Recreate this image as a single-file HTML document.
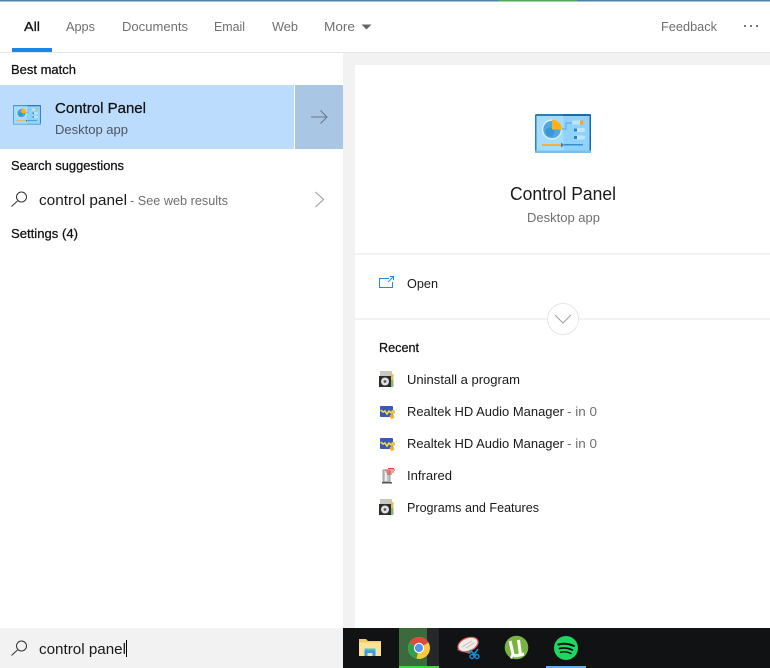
<!DOCTYPE html>
<html lang="en">
<head>
<meta charset="utf-8">
<title>Search - Control Panel</title>
<style>
html,body{margin:0;padding:0;background:#fff;width:770px;height:668px;overflow:hidden}
svg{display:block;font-family:"Liberation Sans",sans-serif;font-size:13px;fill:#1a1a1a}
.g{fill:#707070}
.m{stroke:#111;stroke-width:.25;fill:#111}
</style>
</head>
<body>
<svg width="770" height="668" viewBox="0 0 770 668" xmlns="http://www.w3.org/2000/svg">
<defs>
<symbol id="cp" viewBox="0 0 56 39">
<rect x="0" y="0" width="56" height="39" rx="1.500" fill="#2b7fb8"/>
<rect x="28" y="0" width="28" height="39" rx="1.500" fill="#1a6ba6"/>
<rect x="0" y="36.500" width="56" height="2.500" fill="#7cc0e8"/>
<rect x="1.500" y="2" width="53" height="34.500" fill="#8fd2fb"/>
<rect x="1.500" y="2" width="27" height="34.500" fill="#a4dcfc"/>
<circle cx="17" cy="15.500" r="10" fill="#e4f5fe"/>
<circle cx="17" cy="15.500" r="8.800" fill="#4fa9e0"/>
<circle cx="15" cy="18" r="4.500" fill="#3a97d4"/>
<path d="M17 5.500 A10 10 0 0 1 27 15.500 L17 15.500Z" fill="#fdb21c"/>
<path d="M27 15 H31 V9 H37" fill="none" stroke="#5aa9de" stroke-width="1"/>
<rect x="37" y="6.500" width="12" height="4" rx="2" fill="#bfe5fb"/>
<rect x="45" y="6.500" width="3.500" height="4" fill="#f7a52a"/>
<rect x="39" y="14" width="11" height="4" rx="2" fill="#bfe5fb"/>
<rect x="39" y="14.500" width="3" height="3" fill="#2a80c0"/>
<rect x="39" y="21.500" width="11" height="4" rx="2" fill="#bfe5fb"/>
<rect x="39" y="22" width="3" height="3" fill="#2a80c0"/>
<rect x="7" y="30" width="19" height="2" fill="#f0b043"/>
<path d="M26 28.500 l3 2.500 -3 2.500z" fill="#2a80c0"/>
<rect x="29" y="30" width="19" height="1.500" fill="#3a8fca"/>
</symbol>
<symbol id="un" viewBox="0 0 15 16">
<rect x="1" y="0" width="12" height="5" fill="#c8c8bc"/>
<rect x="11" y="3" width="3.500" height="6" fill="#d9bf6a"/>
<rect x="11" y="9" width="3.500" height="7" fill="#8fb07c"/>
<rect x="0" y="5" width="12" height="11" fill="#2b2d2f"/>
<circle cx="6" cy="10.500" r="4" fill="#e0e0e0"/>
<circle cx="6" cy="10.500" r="1.400" fill="#555"/>
</symbol>
<symbol id="rt" viewBox="0 0 16 13">
<rect x="0" y="0" width="13" height="11" rx="1" fill="#3b57bb"/>
<path d="M0.500 4 L3 6 L5 5 L7 8 L9 5 L11 7 L14 4" fill="none" stroke="#e9e23e" stroke-width="1.600"/>
<circle cx="13" cy="6" r="2" fill="#eec04a"/>
<circle cx="12" cy="10.500" r="2.300" fill="#eeb233"/>
</symbol>
</defs>

<!-- top accent -->
<rect x="0" y="0" width="770" height="1.500" fill="#4a81a8"/>
<rect x="499" y="0" width="78" height="1.500" fill="#55a85a"/>

<!-- tabs -->
<text x="24" y="31" class="m" textLength="16" lengthAdjust="spacingAndGlyphs">All</text>
<text x="66" y="31" class="g" textLength="29" lengthAdjust="spacingAndGlyphs">Apps</text>
<text x="122" y="31" class="g" textLength="66" lengthAdjust="spacingAndGlyphs">Documents</text>
<text x="214" y="31" class="g" textLength="31" lengthAdjust="spacingAndGlyphs">Email</text>
<text x="272" y="31" class="g" textLength="26" lengthAdjust="spacingAndGlyphs">Web</text>
<text x="324" y="31" class="g" textLength="31" lengthAdjust="spacingAndGlyphs">More</text>
<path d="M361.500 24.500 H371.500 L366.500 29.500Z" fill="#666"/>
<text x="661" y="31" class="g" textLength="56" lengthAdjust="spacingAndGlyphs">Feedback</text>
<rect x="744" y="25" width="2" height="2" fill="#777"/>
<rect x="750" y="25" width="2" height="2" fill="#777"/>
<rect x="756" y="25" width="2" height="2" fill="#777"/>
<rect x="12" y="48" width="40" height="4" fill="#1a87ea"/>
<rect x="0" y="52" width="770" height="1" fill="#e6e6e6"/>

<!-- right column backdrop -->
<rect x="343" y="53" width="427" height="12" fill="#f2f2f2"/>
<rect x="343" y="53" width="12" height="575" fill="#f2f2f2"/>

<!-- left list -->
<text x="11" y="74" class="m" textLength="65" lengthAdjust="spacingAndGlyphs">Best match</text>
<rect x="0" y="85" width="294" height="64" fill="#bbdcfc"/>
<rect x="295" y="85" width="48" height="64" fill="#a9c7e4"/>
<use href="#cp" x="13" y="105" width="28" height="20"/>
<text x="55" y="113" font-size="15" class="m" textLength="91" lengthAdjust="spacingAndGlyphs">Control Panel</text>
<text x="55" y="134" fill="#4d5560" textLength="73" lengthAdjust="spacingAndGlyphs">Desktop app</text>
<path d="M311 117 H327 M320.500 110.500 L327 117 L320.500 123.500" fill="none" stroke="#6a7684" stroke-width="1"/>

<text x="11" y="170" class="m" textLength="113" lengthAdjust="spacingAndGlyphs">Search suggestions</text>
<g fill="none" stroke="#333" stroke-width="1">
<circle cx="21.500" cy="197" r="5"/>
<path d="M17.500 201 L11.500 206.500"/>
</g>
<text x="39" y="205" font-size="15" fill="#1a1a1a" textLength="88" lengthAdjust="spacingAndGlyphs">control panel</text>
<text x="130" y="205" fill="#707070" textLength="98" lengthAdjust="spacingAndGlyphs">- See web results</text>
<path d="M315.500 192 L323.500 199.500 L315.500 207" fill="none" stroke="#999" stroke-width="1"/>
<text x="11" y="238" class="m" textLength="67" lengthAdjust="spacingAndGlyphs">Settings (4)</text>

<!-- right header -->
<use href="#cp" x="535" y="114" width="56" height="39"/>
<text x="510" y="200" font-size="18" fill="#1a1a1a" textLength="106" lengthAdjust="spacingAndGlyphs">Control Panel</text>
<text x="527" y="222" class="g" textLength="73" lengthAdjust="spacingAndGlyphs">Desktop app</text>
<rect x="355" y="253" width="415" height="2" fill="#f2f2f2"/>

<!-- open -->
<path d="M389 278.500 H379.500 V287.500 H392.500 V282" fill="none" stroke="#2a86e0" stroke-width="1"/>
<path d="M388 282 L393.500 276.500 M390 276.500 H393.500 V280" fill="none" stroke="#2a86e0" stroke-width="1"/>
<text x="407" y="288" fill="#1a1a1a" textLength="31" lengthAdjust="spacingAndGlyphs">Open</text>
<rect x="355" y="318" width="415" height="2" fill="#f2f2f2"/>
<circle cx="563" cy="319" r="15.500" fill="#fff" stroke="#e6e6e6" stroke-width="1"/>
<path d="M555 315 L563 323 L571 315" fill="none" stroke="#a0a0a0" stroke-width="1"/>

<!-- recent -->
<text x="379" y="352" class="m" textLength="40" lengthAdjust="spacingAndGlyphs">Recent</text>
<use href="#un" x="379" y="371" width="15" height="16"/>
<text x="407" y="384" textLength="113" lengthAdjust="spacingAndGlyphs">Uninstall a program</text>
<use href="#rt" x="380" y="406" width="16" height="13"/>
<text x="407" y="416" textLength="157" lengthAdjust="spacingAndGlyphs">Realtek HD Audio Manager</text>
<text x="567" y="416" class="g" textLength="30" lengthAdjust="spacingAndGlyphs">- in 0</text>
<use href="#rt" x="380" y="438" width="16" height="13"/>
<text x="407" y="448" textLength="157" lengthAdjust="spacingAndGlyphs">Realtek HD Audio Manager</text>
<text x="567" y="448" class="g" textLength="30" lengthAdjust="spacingAndGlyphs">- in 0</text>
<g>
<rect x="383" y="470" width="7" height="12" fill="#c4c4c4" stroke="#8a8a8a" stroke-width=".8"/>
<rect x="385" y="471" width="2" height="10" fill="#ededed"/>
<rect x="382" y="482" width="10" height="1.500" fill="#555"/>
<path d="M385 470 L395 470 M386 472 L394 472 M387 474 L392 474 M388 468.500 L394 468.500" stroke="#d9403a" stroke-width="1.100" fill="none"/>
</g>
<text x="407" y="480" textLength="45" lengthAdjust="spacingAndGlyphs">Infrared</text>
<use href="#un" x="379" y="499" width="15" height="16"/>
<text x="407" y="512" textLength="132" lengthAdjust="spacingAndGlyphs">Programs and Features</text>

<!-- search box -->
<rect x="0" y="628" width="343" height="40" fill="#f2f2f2"/>
<g fill="none" stroke="#333" stroke-width="1">
<circle cx="21.500" cy="646" r="5"/>
<path d="M17.500 650 L11.500 655.500"/>
</g>
<text x="39" y="654" font-size="15" fill="#1a1a1a" textLength="87" lengthAdjust="spacingAndGlyphs">control panel</text>
<rect x="126" y="640" width="1" height="17" fill="#000"/>

<!-- taskbar -->
<rect x="343" y="628" width="427" height="40" fill="#101214"/>
<rect x="399" y="628" width="28" height="38" fill="#3b6a3d"/>
<rect x="427" y="628" width="12" height="38" fill="#25272a"/>
<rect x="399" y="666" width="40" height="2" fill="#3fd63f"/>
<rect x="546" y="666" width="40" height="2" fill="#64aeee"/>

<!-- explorer -->
<path d="M359 639 H366 L368 641 H381 V656 H359Z" fill="#f3cc62"/>
<rect x="359" y="642.500" width="22" height="13.500" fill="#fbe29a"/>
<path d="M364.500 656 V650 H375.500 V656 H372.500 V653 H367.500 V656Z" fill="#3a9be0"/>
<rect x="364.500" y="648.500" width="11" height="2" fill="#52b4f0"/>

<!-- chrome -->
<circle cx="419" cy="648" r="11" fill="#fbc93a"/>
<path d="M419 648 L409.400 642.500 A11 11 0 0 1 428.500 642.500Z" fill="#dd4b3e"/>
<path d="M419 648 L409.400 642.500 A11 11 0 0 0 416.500 658.700Z" fill="#2f9e4f"/>
<circle cx="419" cy="648" r="5.200" fill="#fff"/>
<circle cx="419" cy="648" r="4.100" fill="#5a94ef"/>

<!-- snipping tool -->
<path d="M457 650 L470 654 L472 651 L459 647Z" fill="#7a7472"/>
<ellipse cx="468" cy="644.500" rx="10.500" ry="6.500" transform="rotate(-22 468 644.500)" fill="#efeaE7" stroke="#dc5a55" stroke-width="1.200"/>
<path d="M462 647 L472 641 M466 648 L474 643" stroke="#c6b8b4" stroke-width=".8" fill="none"/>
<path d="M470 650 L476 656 M478 649 L473 656" stroke="#1e88d8" stroke-width="1.600" fill="none"/>
<circle cx="477" cy="656.500" r="2" fill="none" stroke="#1e88d8" stroke-width="1.400"/>
<circle cx="472" cy="656.500" r="2" fill="none" stroke="#1e88d8" stroke-width="1.400"/>

<!-- utorrent -->
<circle cx="516.500" cy="647.500" r="11.800" fill="#7ab342"/>
<path d="M510 641 L513 654 Q514 656.500 518 655.500 L524 654" fill="none" stroke="#fff" stroke-width="3"/>
<path d="M518.500 640 L520.500 655" fill="none" stroke="#fff" stroke-width="3"/>
<path d="M513 654 L511 658.500" fill="none" stroke="#fff" stroke-width="2.400"/>

<!-- spotify -->
<circle cx="566" cy="648" r="12" fill="#1ed760"/>
<path d="M558.500 644.500 Q566 642.500 574 646" fill="none" stroke="#111" stroke-width="2" stroke-linecap="round"/>
<path d="M559.500 648.500 Q566 647 572.500 650" fill="none" stroke="#111" stroke-width="1.700" stroke-linecap="round"/>
<path d="M560.500 652.300 Q566 651 571 653.500" fill="none" stroke="#111" stroke-width="1.400" stroke-linecap="round"/>
</svg>
</body>
</html>
